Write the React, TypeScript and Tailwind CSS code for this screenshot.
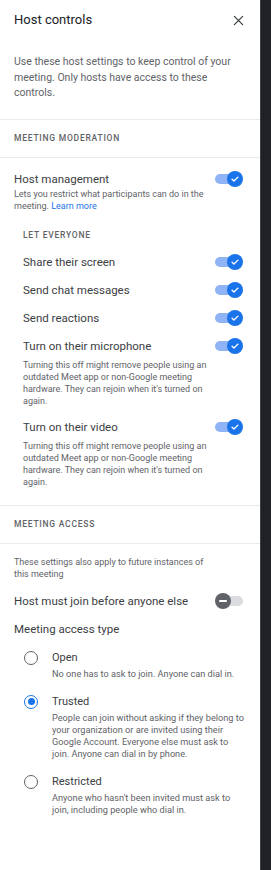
import React from 'react';

const font = { fontFamily: 'Roboto, "Liberation Sans", Arial, sans-serif' };

function Toggle({ on }: { on: boolean }) {
  if (on) {
    return (
      <div className="relative w-[28px] h-[16px] shrink-0">
        <div className="absolute left-0 right-[2px] top-[3px] h-[10px] rounded-full bg-[#8fb4f6]" />
        <div className="absolute right-0 top-0 w-[16px] h-[16px] rounded-full bg-[#1a73e8] flex items-center justify-center">
          <svg width="10" height="10" viewBox="0 0 24 24" fill="none" stroke="white" strokeWidth={3.2} strokeLinecap="round" strokeLinejoin="round">
            <path d="M5 12.5l4.5 4.5L19 7.5" />
          </svg>
        </div>
      </div>
    );
  }
  return (
    <div className="relative w-[28px] h-[16px] shrink-0">
      <div className="absolute left-[2px] right-0 top-[3px] h-[10px] rounded-full bg-[#dadce0]" />
      <div className="absolute left-0 top-0 w-[16px] h-[16px] rounded-full bg-[#5f6368] flex items-center justify-center">
        <div className="w-[8px] h-[2px] bg-white rounded-full" />
      </div>
    </div>
  );
}

function Radio({ checked }: { checked: boolean }) {
  return (
    <div
      className={`w-[14px] h-[14px] rounded-full border-[1.6px] flex items-center justify-center shrink-0 ${
        checked ? 'border-[#1a73e8]' : 'border-[#5f6368]'
      }`}
    >
      {checked && <div className="w-[7px] h-[7px] rounded-full bg-[#1a73e8]" />}
    </div>
  );
}

function SettingRow({ label, on = true }: { label: string; on?: boolean }) {
  return (
    <div className="flex items-center justify-between pr-[17px]">
      <span className="text-[11.5px] leading-[16px] text-[#3c4043]">{label}</span>
      <Toggle on={on} />
    </div>
  );
}

function Hint({ children, className = '' }: { children: React.ReactNode; className?: string }) {
  return <p className={`text-[9px] leading-[12px] text-[#5f6368] ${className}`}>{children}</p>;
}

function SectionHeader({ title }: { title: string }) {
  return (
    <div className="border-y border-[#e8eaed] px-[14px] pt-[12px] pb-[13px]">
      <h3 className="text-[8.5px] leading-[12px] font-medium tracking-[0.09em] text-[#5f6368]">{title}</h3>
    </div>
  );
}

const accessTypes = [
  { label: 'Open', desc: 'No one has to ask to join. Anyone can dial in.', checked: false },
  {
    label: 'Trusted',
    desc: 'People can join without asking if they belong to your organization or are invited using their Google Account. Everyone else must ask to join. Anyone can dial in by phone.',
    checked: true,
  },
  {
    label: 'Restricted',
    desc: "Anyone who hasn't been invited must ask to join, including people who dial in.",
    checked: false,
  },
];

export default function App() {
  return (
    <div className="flex h-[870px] w-[271px] bg-[#202124]" style={font}>
      <div className="w-[260px] shrink-0 bg-white flex flex-col">
        {/* header */}
        <div className="flex items-center justify-between pl-[14px] pr-[16px] pt-[12px]">
          <h2 className="text-[13px] leading-[16px] text-[#202124]">Host controls</h2>
          <svg width="11" height="11" viewBox="0 0 12 12" stroke="#3c4043" strokeWidth={1.4} strokeLinecap="round">
            <path d="M1.5 1.5l9 9M10.5 1.5l-9 9" />
          </svg>
        </div>
        <p className="px-[14px] mt-[26px] mb-[18px] text-[10.5px] leading-[15.5px] text-[#5f6368]">
          Use these host settings to keep control of your meeting. Only hosts have access to these controls.
        </p>

        <SectionHeader title="MEETING MODERATION" />

        <div className="pl-[14px] pt-[13px]">
          <SettingRow label="Host management" />
          <Hint className="mt-[1px] w-[192px]">
            Lets you restrict what participants can do in the meeting.{' '}
            <span className="text-[#1a73e8]">Learn more</span>
          </Hint>

          <div className="pl-[9px]">
            <h4 className="mt-[17px] text-[8.5px] leading-[12px] font-medium tracking-[0.09em] text-[#5f6368]">
              LET EVERYONE
            </h4>
            <div className="mt-[13px] flex flex-col gap-[12px]">
              <SettingRow label="Share their screen" />
              <SettingRow label="Send chat messages" />
              <SettingRow label="Send reactions" />
              <div>
                <SettingRow label="Turn on their microphone" />
                <Hint className="mt-[5px] w-[186px]">
                  Turning this off might remove people using an outdated Meet app or non-Google meeting hardware. They
                  can rejoin when it's turned on again.
                </Hint>
              </div>
              <div>
                <SettingRow label="Turn on their video" />
                <Hint className="mt-[5px] w-[186px]">
                  Turning this off might remove people using an outdated Meet app or non-Google meeting hardware. They
                  can rejoin when it's turned on again.
                </Hint>
              </div>
            </div>
          </div>
        </div>

        <div className="mt-[17px]">
          <SectionHeader title="MEETING ACCESS" />
        </div>

        <div className="pl-[14px] pt-[12px]">
          <Hint className="w-[190px]">These settings also apply to future instances of this meeting</Hint>
          <div className="mt-[13px]">
            <SettingRow label="Host must join before anyone else" on={false} />
          </div>
          <div className="mt-[12px] text-[11.5px] leading-[16px] text-[#3c4043]">Meeting access type</div>

          <div className="pl-[10px] pr-[16px]">
            {accessTypes.map((t, i) => (
              <div key={t.label} className={`flex gap-[14px] ${i === 0 ? 'mt-[13px]' : 'mt-[14px]'}`}>
                <div className="h-[16px] flex items-center">
                  <Radio checked={t.checked} />
                </div>
                <div className="flex-1">
                  <div className="text-[11px] leading-[16px] text-[#3c4043]">{t.label}</div>
                  <p className="mt-[2px] text-[9.2px] leading-[12px] text-[#5f6368]">{t.desc}</p>
                </div>
              </div>
            ))}
          </div>
        </div>
      </div>
      <div className="flex-1 border-l border-[#3c4043]" />
    </div>
  );
}
